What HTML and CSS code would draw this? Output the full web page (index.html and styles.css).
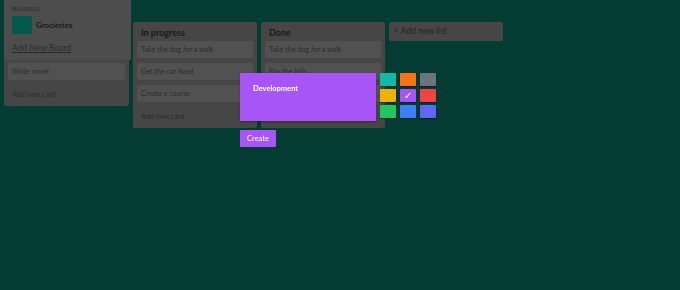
FILE: index.html
```html
<!DOCTYPE html>
<html lang="en">

<head>
  <meta charset="UTF-8">
  <meta name="viewport" content="width=device-width, initial-scale=1.0">
  <title>Boards</title>
  <link rel="stylesheet" href="styles.css">
</head>

<body>
  <div class="board">
    <div class="list first">
      <div class="list-title">To do</div>
      <div class="card">Read a book</div>
      <div class="card">Write novel</div>
      <div class="add-card">Add new card</div>
    </div>

    <div class="list">
      <div class="list-title">In progress</div>
      <div class="card">Take the dog for a walk</div>
      <div class="card">Get the car fixed</div>
      <div class="card">Create a course</div>
      <div class="add-card">Add new card</div>
    </div>

    <div class="list">
      <div class="list-title">Done</div>
      <div class="card">Take the dog for a walk</div>
      <div class="card">Pay the bills</div>
      <div class="card">Clean the house</div>
      <div class="add-card">Add new card</div>
    </div>

    <div class="add-list">+ Add new list</div>
  </div>

  <div class="boards-menu">
    <div class="boards-label">Boards</div>
    <div class="board-item">
      <span class="board-thumb"></span>
      <span class="board-name">Grocieries</span>
    </div>
    <a class="add-board" href="#">Add New Board</a>
  </div>

  <div class="overlay"></div>

  <div class="quick-edit">
    <div class="edit-main">
      <div class="edit-card">Development</div>
      <button class="create-btn">Create</button>
    </div>
    <div class="colors">
      <span class="swatch teal"></span>
      <span class="swatch orange"></span>
      <span class="swatch gray"></span>
      <span class="swatch yellow"></span>
      <span class="swatch purple selected">&#10003;</span>
      <span class="swatch red"></span>
      <span class="swatch green"></span>
      <span class="swatch blue"></span>
      <span class="swatch indigo"></span>
    </div>
  </div>
</body>

</html>
```

FILE: styles.css
```css
* {
  box-sizing: border-box;
}

body {
  font-family: Lato, "Open Sans", Arial, sans-serif;
  font-size: 7.2px;
  background-color: #087667;
  color: #5a5a5a;
  margin: 0;
  padding: 0;
  min-height: 100vh;
}

.board {
  display: flex;
  align-items: flex-start;
  gap: 4px;
  padding: 22px 4px;
}

.list {
  width: 124px;
  padding: 0 4px 4px;
  background-color: #8d8d8d;
  border-radius: 2px;
}

.list.first {
  width: 125px;
}

.list-title {
  height: 19px;
  line-height: 21px;
  padding: 0 4px;
  font-size: 9px;
  font-weight: bold;
  color: #333;
}

.card {
  height: 17px;
  line-height: 17px;
  padding: 0 4px;
  margin-bottom: 5px;
  background-color: #a3a3a3;
  border-radius: 2px;
}

.add-card {
  height: 17px;
  line-height: 20px;
  padding: 0 4px;
}

.add-list {
  width: 114px;
  height: 19px;
  line-height: 19px;
  padding: 0 5px;
  font-size: 8.5px;
  background-color: #8d8d8d;
  color: #4a4a4a;
  border-radius: 2px;
}

.boards-menu {
  position: absolute;
  top: 0;
  left: 4px;
  width: 127px;
  height: 60px;
  padding: 4px 8px;
  background-color: #9b9b9b;
  border-radius: 0 0 2px 2px;
}

.boards-label {
  font-size: 6.5px;
  letter-spacing: 0.2px;
  text-transform: uppercase;
  color: #555;
  margin-top: 1px;
}

.board-item {
  display: flex;
  align-items: center;
  gap: 4px;
  margin-top: 4px;
}

.board-thumb {
  width: 20px;
  height: 18px;
  background-color: #0bb098;
}

.board-name {
  font-size: 8px;
  font-weight: bold;
  color: #333;
}

.add-board {
  display: block;
  margin-top: 9px;
  color: #555;
  font-size: 8.5px;
}

.overlay {
  position: fixed;
  inset: 0;
  background-color: rgba(0, 0, 0, 0.5);
}

.quick-edit {
  position: absolute;
  top: 73px;
  left: 240px;
  display: flex;
  gap: 4px;
}

.edit-main {
  display: flex;
  flex-direction: column;
  align-items: flex-start;
  gap: 9px;
}

.edit-card {
  width: 136px;
  height: 48px;
  padding: 11px 13px;
  background-color: #a855f7;
  color: #fff;
  font-size: 7.5px;
  font-weight: bold;
  border-radius: 1px;
  box-shadow: 0 1px 2px rgba(0, 0, 0, 0.3);
}

.create-btn {
  width: 36px;
  height: 17px;
  padding: 0;
  border: none;
  border-radius: 1px;
  background-color: #a855f7;
  color: #fff;
  font-family: inherit;
  font-size: 7.5px;
}

.colors {
  display: grid;
  grid-template-columns: repeat(3, 16px);
  grid-auto-rows: 13px;
  column-gap: 4px;
  row-gap: 3px;
}

.swatch {
  border-radius: 1px;
  box-shadow: 0 1px 1px rgba(0, 0, 0, 0.35);
  color: #fff;
  font-size: 10px;
  line-height: 13px;
  text-align: center;
}

.teal { background-color: #14b8a6; }
.orange { background-color: #f97316; }
.gray { background-color: #6b7280; }
.yellow { background-color: #eab308; }
.purple { background-color: #a855f7; }
.red { background-color: #ef4444; }
.green { background-color: #22c55e; }
.blue { background-color: #3b82f6; }
.indigo { background-color: #6366f1; }
```
